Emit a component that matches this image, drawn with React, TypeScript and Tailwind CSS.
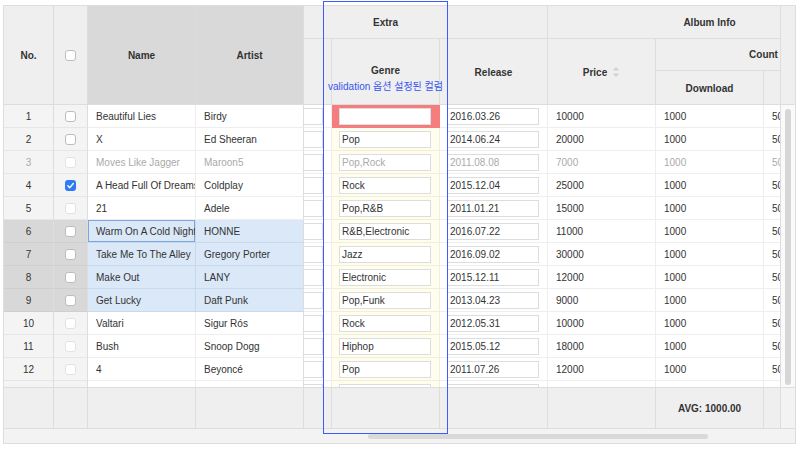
import clsx from 'clsx';

interface Row {
  no: number | string;
  name: string;
  artist: string;
  genre: string;
  release: string;
  price: string;
  download: string;
  upload: string;
  disabled?: boolean;
  checked?: boolean;
  selected?: boolean;
  focused?: boolean;
  invalid?: boolean;
  faint?: boolean;
}

const rows: Row[] = [
  { no: 1, name: 'Beautiful Lies', artist: 'Birdy', genre: '', release: '2016.03.26', price: '10000', download: '1000', upload: '5000', invalid: true },
  { no: 2, name: 'X', artist: 'Ed Sheeran', genre: 'Pop', release: '2014.06.24', price: '20000', download: '1000', upload: '5000' },
  { no: 3, name: 'Moves Like Jagger', artist: 'Maroon5', genre: 'Pop,Rock', release: '2011.08.08', price: '7000', download: '1000', upload: '5000', disabled: true, faint: true },
  { no: 4, name: 'A Head Full Of Dreams', artist: 'Coldplay', genre: 'Rock', release: '2015.12.04', price: '25000', download: '1000', upload: '5000', checked: true },
  { no: 5, name: '21', artist: 'Adele', genre: 'Pop,R&B', release: '2011.01.21', price: '15000', download: '1000', upload: '5000', faint: true },
  { no: 6, name: 'Warm On A Cold Night', artist: 'HONNE', genre: 'R&B,Electronic', release: '2016.07.22', price: '11000', download: '1000', upload: '5000', selected: true, focused: true },
  { no: 7, name: 'Take Me To The Alley', artist: 'Gregory Porter', genre: 'Jazz', release: '2016.09.02', price: '30000', download: '1000', upload: '5000', selected: true },
  { no: 8, name: 'Make Out', artist: 'LANY', genre: 'Electronic', release: '2015.12.11', price: '12000', download: '1000', upload: '5000', selected: true },
  { no: 9, name: 'Get Lucky', artist: 'Daft Punk', genre: 'Pop,Funk', release: '2013.04.23', price: '9000', download: '1000', upload: '5000', selected: true },
  { no: 10, name: 'Valtari', artist: 'Sigur Rós', genre: 'Rock', release: '2012.05.31', price: '10000', download: '1000', upload: '5000', faint: true },
  { no: 11, name: 'Bush', artist: 'Snoop Dogg', genre: 'Hiphop', release: '2015.05.12', price: '18000', download: '1000', upload: '5000', faint: true },
  { no: 12, name: '4', artist: 'Beyoncé', genre: 'Pop', release: '2011.07.26', price: '12000', download: '1000', upload: '5000', faint: true },
  // only the top edge of row 13 shows above the summary
  { no: '', name: '', artist: '', genre: '', release: '', price: '', download: '', upload: '' },
];

function Checkbox({ checked, faint }: { checked?: boolean; faint?: boolean }) {
  if (checked) {
    return (
      <span className="flex h-[11px] w-[11px] items-center justify-center rounded-[3px] bg-[#2f7bf5]">
        <svg viewBox="0 0 10 10" className="h-[9px] w-[9px]">
          <path d="M2 5.3 L4.2 7.4 L8.1 2.7" fill="none" stroke="white" strokeWidth="1.6" strokeLinecap="round" strokeLinejoin="round" />
        </svg>
      </span>
    );
  }
  return (
    <span className={clsx('block h-[11px] w-[11px] rounded-[3px] border bg-white', faint ? 'border-[#e2e2e2]' : 'border-[#bdbdbd]')} />
  );
}

function Input({ value, muted }: { value?: string; muted?: boolean }) {
  return (
    <span className={clsx('block h-[17px] w-[92px] overflow-hidden whitespace-nowrap border border-[#ddd] bg-white px-[2px] leading-[15px]', muted && 'text-[#aaa]')}>
      {value}
    </span>
  );
}

function SortIcon() {
  return (
    <svg viewBox="0 0 8 12" className="h-[12px] w-[8px]">
      <path d="M4 1 L7 4.5 H1 Z" fill="#cfcfcf" />
      <path d="M4 11 L7 7.5 H1 Z" fill="#cfcfcf" />
    </svg>
  );
}

export default function App() {
  return (
    <div className="relative h-[450px] w-[800px] bg-white pl-[3px] pt-[5px] font-['Liberation_Sans','Noto_Sans_CJK_KR',sans-serif] text-[10px] text-[#333]">
      <div className="w-[793px] border border-[#ddd]">
        <div className="flex">
          {/* frozen columns */}
          <div className="flex w-[300px] flex-col">
            <div className="flex h-[99px] border-b border-[#ddd] font-bold">
              <div className="flex w-[50px] items-center justify-center border-r border-[#ddd] bg-[#efefef]">No.</div>
              <div className="flex w-[34px] items-center justify-center border-r border-[#ddd] bg-[#efefef]">
                <Checkbox />
              </div>
              <div className="flex w-[108px] items-center justify-center border-r border-[#ddd] bg-[#d9d9d9]">Name</div>
              <div className="flex w-[108px] items-center justify-center border-r border-[#ddd] bg-[#d9d9d9]">Artist</div>
            </div>
            <div className="h-[282px] overflow-hidden">
              {rows.map((r, i) => (
                <div key={i} className={clsx('flex h-[23px]', r.disabled && 'text-[#aaa]')}>
                  <div className={clsx('flex w-[50px] items-center justify-center border-b border-r border-[#ddd]', r.selected ? 'bg-[#d8d8d8] border-b-[#cfcfcf]' : 'bg-[#f4f4f4] border-b-[#e6e6e6]')}>
                    {r.no}
                  </div>
                  <div className={clsx('flex w-[34px] items-center justify-center border-b border-r border-[#ddd]', r.selected ? 'bg-[#d8d8d8] border-b-[#cfcfcf]' : 'bg-[#f4f4f4] border-b-[#e6e6e6]')}>
                    <Checkbox checked={r.checked} faint={r.faint} />
                  </div>
                  <div
                    className={clsx(
                      'flex w-[108px] items-center overflow-hidden whitespace-nowrap border-b border-r px-[8px]',
                      r.selected ? 'bg-[#dbe8f8] border-[#c9d9ec]' : 'bg-white border-[#eee]',
                      r.focused && 'shadow-[inset_0_0_0_1px_#7ea5da]'
                    )}
                  >
                    {r.name}
                  </div>
                  <div className={clsx('flex w-[108px] items-center overflow-hidden whitespace-nowrap border-b border-r border-r-[#ddd] px-[8px]', r.selected ? 'bg-[#dbe8f8] border-b-[#c9d9ec]' : 'bg-white border-b-[#eee]')}>
                    {r.artist}
                  </div>
                </div>
              ))}
            </div>
            <div className="flex h-[42px] border-y border-[#ddd] bg-[#efefef]">
              <div className="w-[50px] border-r border-[#ddd]" />
              <div className="w-[34px] border-r border-[#ddd]" />
              <div className="w-[108px] border-r border-[#ddd]" />
              <div className="w-[108px] border-r border-[#ddd]" />
            </div>
          </div>

          {/* scrolled columns */}
          <div className="w-[476px] overflow-hidden">
            <div className="ml-[-80px] grid h-[99px] w-[648px] grid-cols-[repeat(6,108px)] grid-rows-[33px_32px_34px] border-b border-[#ddd] bg-[#efefef] font-bold">
              <div className="col-span-3 col-start-1 row-start-1 flex items-center justify-center border-b border-r border-[#ddd]">Extra</div>
              <div className="col-span-3 col-start-4 row-start-1 flex items-center justify-center border-b border-r border-[#ddd]">Album Info</div>
              <div className="col-start-1 row-span-2 row-start-2 border-r border-[#ddd]" />
              <div className="col-start-2 row-span-2 row-start-2 flex flex-col items-center border-r border-[#ddd] pt-[26px]">
                <span className="leading-[12px]">Genre</span>
                <span className="mt-[4px] whitespace-nowrap font-normal leading-[12px] text-[#3655ee]">validation 옵션 설정된 컬럼</span>
              </div>
              <div className="col-start-3 row-span-2 row-start-2 flex items-center justify-center border-r border-[#ddd]">Release</div>
              <div className="col-start-4 row-span-2 row-start-2 flex items-center justify-center gap-[5px] border-r border-[#ddd]">
                <span>Price</span>
                <SortIcon />
              </div>
              <div className="col-span-2 col-start-5 row-start-2 flex items-center justify-center border-b border-r border-[#ddd]">Count</div>
              <div className="col-start-5 row-start-3 flex items-center justify-center border-r border-[#ddd]">Download</div>
              <div className="col-start-6 row-start-3 border-r border-[#ddd]" />
            </div>
            <div className="h-[282px] overflow-hidden">
              <div className="ml-[-80px] w-[648px]">
                {rows.map((r, i) => (
                  <div key={i} className={clsx('grid h-[23px] grid-cols-[repeat(6,108px)]', r.disabled && 'text-[#aaa]')}>
                    <div className="flex items-center border-b border-r border-[#eee] px-[7px]">
                      <Input />
                    </div>
                    <div className={clsx('flex items-center border-b border-r px-[7px]', r.invalid ? 'bg-[#f67d7d] border-[#f67d7d]' : 'bg-[#fffdee] border-[#f1eedc]')}>
                      <Input value={r.genre} muted={r.disabled} />
                    </div>
                    <div className="flex items-center border-b border-r border-[#eee] px-[7px]">
                      <Input value={r.release} muted={r.disabled} />
                    </div>
                    <div className="flex items-center border-b border-r border-[#eee] px-[8px]">{r.price}</div>
                    <div className="flex items-center border-b border-r border-[#eee] px-[8px]">{r.download}</div>
                    <div className="flex items-center border-b border-r border-[#eee] px-[8px]">{r.upload}</div>
                  </div>
                ))}
              </div>
            </div>
            <div className="h-[42px] border-y border-[#ddd] bg-[#efefef]">
              <div className="ml-[-80px] grid h-full w-[648px] grid-cols-[repeat(6,108px)]">
                <div className="border-r border-[#ddd]" />
                <div className="border-r border-[#ddd]" />
                <div className="border-r border-[#ddd]" />
                <div className="border-r border-[#ddd]" />
                <div className="flex items-center justify-center border-r border-[#ddd] font-bold">AVG: 1000.00</div>
                <div className="border-r border-[#ddd]" />
              </div>
            </div>
          </div>

          {/* vertical scrollbar */}
          <div className="flex w-[15px] flex-col border-l border-[#ddd]">
            <div className="h-[99px] border-b border-[#ddd] bg-[#efefef]" />
            <div className="flex h-[282px] justify-center bg-[#fafafa] pb-[2px] pt-[4px]">
              <div className="w-[6px] rounded-[3px] bg-[#d6d6d6]" />
            </div>
            <div className="h-[42px] border-y border-[#ddd] bg-[#f3f3f3]" />
          </div>
        </div>

        {/* horizontal scrollbar */}
        <div className="flex h-[14px] items-center bg-[#f3f3f3] pl-[364px]">
          <div className="h-[5px] w-[340px] rounded-[3px] bg-[#d9d9d9]" />
        </div>
      </div>

      {/* highlight box around the validated column */}
      <div className="pointer-events-none absolute left-[323px] top-[1px] h-[433px] w-[125px] border border-solid border-[#3d5cff]" />
    </div>
  );
}
